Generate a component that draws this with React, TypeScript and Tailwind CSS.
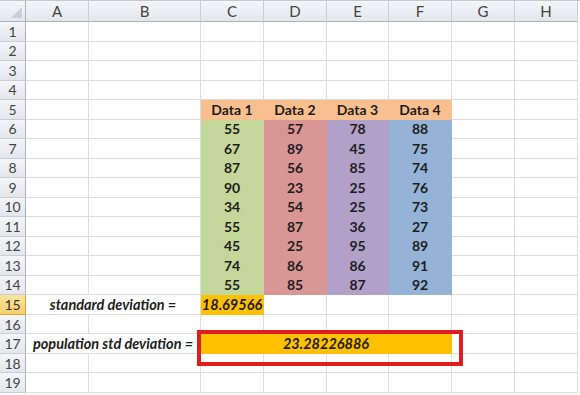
const cols = ['A', 'B', 'C', 'D', 'E', 'F', 'G', 'H'];

const data = [
  [55, 57, 78, 88],
  [67, 89, 45, 75],
  [87, 56, 85, 74],
  [90, 23, 25, 76],
  [34, 54, 25, 73],
  [55, 87, 36, 27],
  [45, 25, 95, 89],
  [74, 86, 86, 91],
  [55, 85, 87, 92],
];

const fills = ['bg-[#c4d79b]', 'bg-[#da9694]', 'bg-[#b1a0c7]', 'bg-[#95b3d7]'];

const cell = 'border-r border-b border-[#dadcde] bg-white';
const rowHead =
  'flex items-center justify-center border-r border-b border-r-[#aab3be] border-b-[#c9ced5] bg-gradient-to-b from-[#f4f6f8] to-[#e3e7ec] text-[14px] text-[#444]';

function Row({ n }: { n: number }) {
  const selected = n === 15;
  const head = (
    <div
      className={
        selected
          ? 'flex items-center justify-center border-r border-b border-r-[#d9a43a] border-b-[#d9a43a] bg-gradient-to-b from-[#fbe3a0] to-[#f6cf6c] text-[14px] text-[#333]'
          : rowHead
      }
    >
      {n}
    </div>
  );

  if (n === 5) {
    return (
      <>
        {head}
        <div className={cell} />
        <div className={cell} />
        {[1, 2, 3, 4].map((d) => (
          <div key={d} className="flex items-center justify-center border-r border-b border-transparent bg-[#fabf8f] font-bold">
            Data {d}
          </div>
        ))}
        <div className={cell} />
        <div className={cell} />
      </>
    );
  }

  if (n >= 6 && n <= 14) {
    const vals = data[n - 6];
    return (
      <>
        {head}
        <div className={cell} />
        <div className={cell} />
        {vals.map((v, i) => (
          <div key={i} className={`flex items-center justify-center border-r border-b border-transparent font-bold ${fills[i]}`}>
            {v}
          </div>
        ))}
        <div className={cell} />
        <div className={cell} />
      </>
    );
  }

  if (n === 15) {
    return (
      <>
        {head}
        <div className={`col-span-2 flex items-center justify-center text-[14.5px] font-bold italic ${cell}`}>standard deviation =</div>
        <div className="flex items-center justify-center border-r border-b border-transparent bg-[#ffc000] text-[14.5px] font-bold italic">
          18.69566
        </div>
        <div className={cell} />
        <div className={cell} />
        <div className={cell} />
        <div className={cell} />
        <div className={cell} />
      </>
    );
  }

  if (n === 17) {
    return (
      <>
        {head}
        <div className={`col-span-2 flex items-center justify-center text-[14.5px] font-bold italic ${cell}`}>population std deviation =</div>
        <div className="col-span-4 flex items-center justify-center border-r border-b border-transparent bg-[#ffc000] text-[14.5px] font-bold italic">
          23.28226886
        </div>
        <div className={cell} />
        <div className={cell} />
      </>
    );
  }

  return (
    <>
      {head}
      {cols.map((c) => (
        <div key={c} className={cell} />
      ))}
    </>
  );
}

export default function App() {
  return (
    <div className="relative h-[395px] w-[580px] overflow-hidden bg-white font-['Lato','Liberation_Sans',sans-serif] text-[14px] text-[#1d1d1d]">
      <div className="grid grid-cols-[26px_63px_112px_63px_63px_62px_63px_63px_63px] grid-rows-[21px_repeat(19,19.53px)] border-t border-[#c3c9d0]">
        <div className="relative border-r border-b border-r-[#aab3be] border-b-[#aab3be] bg-gradient-to-b from-[#f4f6f8] to-[#e3e7ec]">
          <svg className="absolute right-[3px] bottom-[3px]" width="11" height="11" viewBox="0 0 11 11">
            <polygon points="11,0 11,11 0,11" fill="#c8ced6" />
          </svg>
        </div>
        {cols.map((c) => (
          <div
            key={c}
            className="flex items-center justify-center border-r border-b border-r-[#c9ced5] border-b-[#aab3be] bg-gradient-to-b from-[#f4f6f8] to-[#e3e7ec] text-[15px] text-[#444]"
          >
            {c}
          </div>
        ))}
        {Array.from({ length: 19 }, (_, i) => (
          <Row key={i} n={i + 1} />
        ))}
      </div>

      <div className="absolute left-[197px] top-[330px] h-[36px] w-[266px] border-4 border-[#e01b22]" />
    </div>
  );
}
